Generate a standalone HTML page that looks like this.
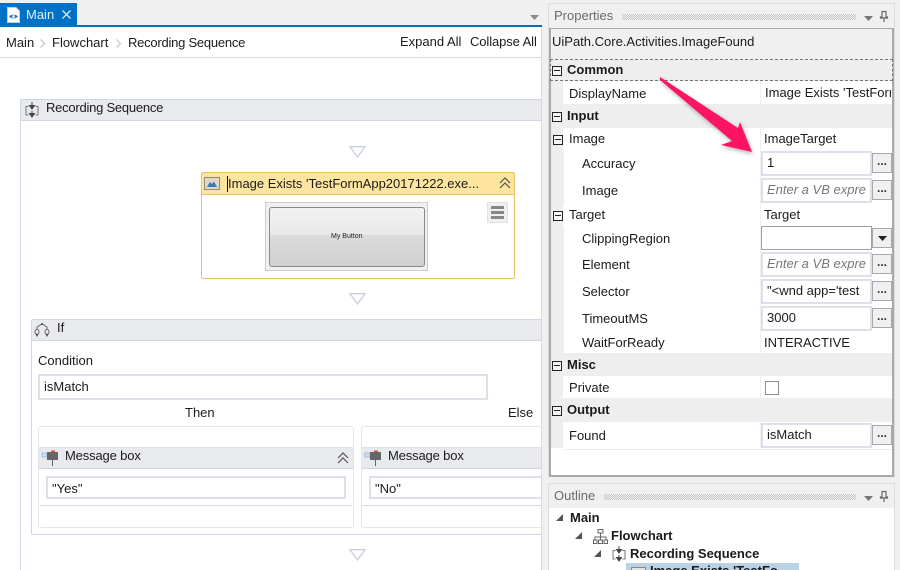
<!DOCTYPE html>
<html><head><meta charset="utf-8"><style>
html,body{margin:0;padding:0}
body{width:900px;height:570px;overflow:hidden;position:relative;background:#f0f0f0;font-family:"Liberation Sans",sans-serif;font-size:13px;color:#1b1b1b}
.a{position:absolute;box-sizing:border-box}
.t{position:absolute;white-space:nowrap;line-height:16px;font-size:13px}
.b{font-weight:bold}
.i{font-style:italic;color:#777}
.inp{position:absolute;box-sizing:border-box;background:#fff;border:2px solid #dde0ea}
.dots{position:absolute;box-sizing:border-box;width:20px;height:20px;background:#f0f0f0;border:1px solid #a8a8a8;font-size:12px;font-weight:bold;text-align:center;line-height:14px;color:#333;left:872px}
.row{position:absolute;left:563px;width:329px;background:#fff;border-bottom:1px solid #eee}
.mn{position:absolute;box-sizing:border-box;width:10px;height:10px;border:1px solid #222;background:#f4f4f4}
.mn:after{content:"";position:absolute;left:1px;top:3px;width:6px;height:1px;background:#222}
.dot{position:absolute;height:6px;background-image:repeating-conic-gradient(#c4c4c4 0 25%,transparent 0 50%);background-size:2px 2px}
svg{position:absolute;overflow:visible}
</style></head><body>

<!-- left doc -->
<div class="a" style="left:0;top:3px;width:77px;height:23px;background:#0072c6"></div>
<div class="a" style="left:0;top:25px;width:542px;height:2px;background:#0072c6"></div>
<div class="a" style="left:0;top:27px;width:542px;height:543px;background:#fff;border-right:1px solid #dcdcdc"></div>
<svg style="left:7px;top:7px" width="13" height="16" viewBox="0 0 13 16"><path d="M.5.5H9L12.500 4V15.500H.5Z" fill="#fff" stroke="#ccc"/><path d="M2 9.500C4 7 9 7 11 9.500 9 12 4 12 2 9.500Z" fill="#2a78c8"/><circle cx="6.500" cy="9.500" r="1.500" fill="#cfe4fa"/></svg>
<div class="t" style="left:26px;top:7px;color:#e4eefa">Main</div>
<svg style="left:62px;top:10px" width="9" height="9"><path d="M.5.5L8.500 8.500M8.500.5L.5 8.500" stroke="#d8e6f6" stroke-width="1.300"/></svg>
<svg style="left:530px;top:15px" width="9" height="5"><path d="M0 0H9L4.500 5Z" fill="#8a8a8a"/></svg>

<div class="t" style="left:6px;top:35px">Main</div>
<svg style="left:40px;top:39px" width="5" height="9"><path d="M.5.5L4.500 4.500.5 8.500" fill="none" stroke="#cfcfcf" stroke-width="1.500"/></svg>
<div class="t" style="left:52px;top:35px">Flowchart</div>
<svg style="left:116px;top:39px" width="5" height="9"><path d="M.5.5L4.500 4.500.5 8.500" fill="none" stroke="#cfcfcf" stroke-width="1.500"/></svg>
<div class="t" style="left:128px;top:35px;letter-spacing:-.24px">Recording Sequence</div>
<div class="t" style="left:400px;top:34px">Expand All</div>
<div class="t" style="left:470px;top:34px;letter-spacing:-.1px">Collapse All</div>
<div class="a" style="left:0;top:57px;width:541px;height:1px;background:#d6d9e0"></div>

<!-- Sequence -->
<div class="a" style="left:20px;top:99px;width:521px;height:471px;border-left:1px solid #d0d6e4;border-top:1px solid #d0d6e4"></div>
<div class="a" style="left:21px;top:100px;width:520px;height:21px;background:#e8eaed;border-bottom:1px solid #d0d6e4"></div>
<svg style="left:25px;top:102px" width="14" height="16" viewBox="0 0 14 16"><path d="M3.500 4.500H1V13H3.500M10.500 4.500H13V13H10.500" fill="none" stroke="#777" stroke-width="1"/><path d="M7 0V4M4.500 3.500L7 7 9.500 3.500ZM7 9V12M4.500 11.500L7 15 9.500 11.500Z" fill="#444" stroke="#444" stroke-width="1"/></svg>
<div class="t" style="left:46px;top:100px;letter-spacing:-.24px">Recording Sequence</div>

<svg style="left:349px;top:146px" width="17" height="12"><path d="M1 .7H16L8.500 11Z" fill="#fff" stroke="#c8cfdc" stroke-width="1.300"/></svg>

<!-- Image exists -->
<div class="a" style="left:201px;top:172px;width:314px;height:107px;background:#fff;border:1px solid #e6c266;border-radius:2px"></div>
<div class="a" style="left:202px;top:173px;width:312px;height:22px;background:#fee59f;border-bottom:1px solid #e6c266"></div>
<svg style="left:204px;top:177px" width="16" height="13" viewBox="0 0 16 13"><rect x=".5" y=".5" width="15" height="12" fill="#e0d8c0" stroke="#8a8a80"/><path d="M3 10L6 5 8 7 10 4.500 13 10Z" fill="#3a78c4"/></svg>
<div class="a" style="left:227px;top:176px;width:1px;height:16px;background:#111"></div>
<div class="t" style="left:228px;top:176px">Image Exists 'TestFormApp20171222.exe...</div>
<svg style="left:499px;top:177px" width="12" height="12"><path d="M1 6L6 1 11 6M1 11L6 6 11 11" fill="none" stroke="#555" stroke-width="1.200"/></svg>
<div class="a" style="left:265px;top:202px;width:163px;height:69px;background:#f0f0f0;border:1px solid #ccc"></div>
<div class="a" style="left:269px;top:207px;width:156px;height:60px;border:1px solid #8a8a8a;border-radius:3px;background:linear-gradient(#f2f2f2 0,#e9e9e9 46%,#dcdcdc 47%,#cfcfcf 100%)"></div>
<div class="t" style="left:331px;top:232px;font-size:7px;line-height:10px;color:#222">My Button</div>
<div class="a" style="left:487px;top:202px;width:21px;height:21px;background:#f0f0f2;border:1px solid #e0e2e8"></div>
<div class="a" style="left:491px;top:206px;width:13px;height:3px;background:#888"></div>
<div class="a" style="left:491px;top:211px;width:13px;height:3px;background:#888"></div>
<div class="a" style="left:491px;top:216px;width:13px;height:3px;background:#888"></div>

<svg style="left:349px;top:293px" width="17" height="12"><path d="M1 .7H16L8.500 11Z" fill="#fff" stroke="#c8cfdc" stroke-width="1.300"/></svg>

<!-- If -->
<div class="a" style="left:31px;top:319px;width:510px;height:216px;border:1px solid #d0d6e4;border-right:0;border-radius:2px 0 0 2px"></div>
<div class="a" style="left:32px;top:320px;width:509px;height:21px;background:#e8eaed;border-bottom:1px solid #d0d6e4"></div>
<svg style="left:34px;top:322px" width="16" height="16" viewBox="0 0 16 16"><path d="M3 7V5L8 2 13 5V7" fill="none" stroke="#666"/><path d="M1.500 12L3 15 4.500 12ZM11.500 12L13 15 14.500 12ZM6.500 3L8 .5 9.500 3Z" fill="#444"/><path d="M1 10C1 6.500 5 6.500 5 10 5 13 1 13 1 10ZM11 10C11 6.500 15 6.500 15 10 15 13 11 13 11 10Z" fill="none" stroke="#666"/></svg>
<div class="t" style="left:57px;top:320px">If</div>
<div class="t" style="left:38px;top:353px">Condition</div>
<div class="inp" style="left:38px;top:374px;width:450px;height:26px"></div>
<div class="t" style="left:44px;top:379px">isMatch</div>
<div class="t" style="left:185px;top:405px">Then</div>
<div class="t" style="left:508px;top:405px">Else</div>

<div class="a" style="left:38px;top:426px;width:316px;height:102px;background:#fff;border:1px solid #e4e6ea;border-radius:3px"></div>
<div class="a" style="left:39px;top:447px;width:314px;height:59px;background:#fff;border-bottom:1px solid #d5d9e3;border-radius:0 0 3px 3px"></div>
<div class="a" style="left:39px;top:447px;width:314px;height:22px;background:#e8eaed;border-bottom:1px solid #d0d6e4;border-top:1px solid #e0e3e8"></div>
<svg style="left:42px;top:449px" width="17" height="17" viewBox="0 0 17 17"><rect x="0" y="4" width="5" height="4" fill="#cfe0f2" stroke="#8fb4dc" stroke-width=".8"/><rect x="5" y="3" width="11" height="8" fill="#666"/><rect x="10" y="11" width="1" height="6" fill="#666"/><rect x="9" y="1.500" width="4" height="1.500" fill="#e44"/></svg>
<div class="t" style="left:65px;top:448px;letter-spacing:-.15px">Message box</div>
<svg style="left:337px;top:452px" width="12" height="12"><path d="M1 6L6 1 11 6M1 11L6 6 11 11" fill="none" stroke="#555" stroke-width="1.200"/></svg>
<div class="inp" style="left:46px;top:476px;width:300px;height:23px"></div>
<div class="t" style="left:52px;top:481px">"Yes"</div>

<div class="a" style="left:361px;top:426px;width:180px;height:102px;background:#fff;border:1px solid #e4e6ea;border-right:0;border-radius:3px 0 0 3px"></div>
<div class="a" style="left:362px;top:447px;width:179px;height:59px;background:#fff;border-bottom:1px solid #d5d9e3"></div>
<div class="a" style="left:362px;top:447px;width:179px;height:22px;background:#e8eaed;border-bottom:1px solid #d0d6e4;border-top:1px solid #e0e3e8"></div>
<svg style="left:365px;top:449px" width="17" height="17" viewBox="0 0 17 17"><rect x="0" y="4" width="5" height="4" fill="#cfe0f2" stroke="#8fb4dc" stroke-width=".8"/><rect x="5" y="3" width="11" height="8" fill="#666"/><rect x="10" y="11" width="1" height="6" fill="#666"/><rect x="9" y="1.500" width="4" height="1.500" fill="#e44"/></svg>
<div class="t" style="left:388px;top:448px;letter-spacing:-.15px">Message box</div>
<div class="inp" style="left:369px;top:476px;width:172px;height:23px;border-right:0"></div>
<div class="t" style="left:375px;top:481px">"No"</div>

<svg style="left:349px;top:549px" width="17" height="12"><path d="M1 .7H16L8.500 11Z" fill="#fff" stroke="#c8cfdc" stroke-width="1.300"/></svg>

<!-- Properties -->
<div class="a" style="left:548px;top:3px;width:347px;height:474px;border:1px solid #dcdcdc;background:#f0f0f0"></div>
<div class="t" style="left:554px;top:8px;color:#6a6a6a">Properties</div>
<div class="dot" style="left:622px;top:14px;width:234px"></div>
<svg style="left:864px;top:16px" width="9" height="5"><path d="M0 0H9L4.500 5Z" fill="#777"/></svg>
<svg style="left:880px;top:11px" width="8" height="11"><path d="M2 .5H6V6H7.500V7H.5V6H2ZM4 7V11" fill="none" stroke="#666" stroke-width="1.200"/></svg>
<div class="a" style="left:549px;top:28px;width:345px;height:449px;border:2px solid #a9a9a9;border-top:1px solid #a9a9a9;background:#fff"></div>
<div class="a" style="left:551px;top:29px;width:341px;height:31px;background:#f0f0f0"></div>
<div class="t" style="left:552px;top:34px">UiPath.Core.Activities.ImageFound</div>

<div class="a" style="left:551px;top:60px;width:341px;height:388px;background:#eee"></div>
<div class="a" style="left:550px;top:59px;width:343px;height:22px;background:#eee;border:1px dashed #777"></div>
<div class="mn" style="left:552px;top:66px"></div>
<div class="t b" style="left:567px;top:62px">Common</div>

<div class="row" style="top:81px;height:23px"></div>
<div class="t" style="left:569px;top:86px">DisplayName</div>
<div class="t" style="left:765px;top:85px;width:126px;overflow:hidden">Image Exists 'TestForm</div>

<div class="mn" style="left:552px;top:112px"></div>
<div class="t b" style="left:567px;top:108px">Input</div>

<div class="row" style="top:128px;height:22px"></div>
<div class="mn" style="left:553px;top:135px"></div>
<div class="t" style="left:569px;top:131px">Image</div>
<div class="t" style="left:764px;top:131px">ImageTarget</div>

<div class="row" style="left:564px;top:150px;width:328px;height:27px"></div>
<div class="t" style="left:582px;top:156px">Accuracy</div>
<div class="inp" style="left:761px;top:151px;width:111px;height:25px"></div>
<div class="t" style="left:767px;top:155px">1</div>
<div class="dots" style="top:153px">...</div>

<div class="row" style="left:564px;top:177px;width:328px;height:27px"></div>
<div class="t" style="left:582px;top:183px">Image</div>
<div class="inp" style="left:761px;top:178px;width:111px;height:25px"></div>
<div class="t i" style="left:767px;top:182px;width:100px;overflow:hidden">Enter a VB expre</div>
<div class="dots" style="top:180px">...</div>

<div class="row" style="top:204px;height:22px"></div>
<div class="mn" style="left:553px;top:211px"></div>
<div class="t" style="left:569px;top:207px">Target</div>
<div class="t" style="left:764px;top:207px">Target</div>

<div class="row" style="left:564px;top:226px;width:328px;height:25px"></div>
<div class="t" style="left:582px;top:231px">ClippingRegion</div>
<div class="a" style="left:761px;top:226px;width:111px;height:24px;background:#fff;border:1px solid #a0a0a0"></div>
<div class="a" style="left:872px;top:228px;width:20px;height:20px;background:#f0f0f0;border:1px solid #a8a8a8"></div>
<svg style="left:878px;top:236px" width="9" height="5"><path d="M0 0H9L4.500 5Z" fill="#222"/></svg>

<div class="row" style="left:564px;top:251px;width:328px;height:27px"></div>
<div class="t" style="left:582px;top:257px">Element</div>
<div class="inp" style="left:761px;top:252px;width:111px;height:25px"></div>
<div class="t i" style="left:767px;top:256px;width:100px;overflow:hidden">Enter a VB expre</div>
<div class="dots" style="top:254px">...</div>

<div class="row" style="left:564px;top:278px;width:328px;height:27px"></div>
<div class="t" style="left:582px;top:284px">Selector</div>
<div class="inp" style="left:761px;top:279px;width:111px;height:25px"></div>
<div class="t" style="left:767px;top:283px;width:100px;overflow:hidden">"&lt;wnd app='test</div>
<div class="dots" style="top:281px">...</div>

<div class="row" style="left:564px;top:305px;width:328px;height:27px"></div>
<div class="t" style="left:582px;top:311px">TimeoutMS</div>
<div class="inp" style="left:761px;top:306px;width:111px;height:25px"></div>
<div class="t" style="left:767px;top:310px">3000</div>
<div class="dots" style="top:308px">...</div>

<div class="row" style="left:564px;top:332px;width:328px;height:21px;border:0"></div>
<div class="t" style="left:582px;top:335px">WaitForReady</div>
<div class="t" style="left:764px;top:335px">INTERACTIVE</div>

<div class="mn" style="left:552px;top:361px"></div>
<div class="t b" style="left:567px;top:357px">Misc</div>

<div class="row" style="top:376px;height:22px;border:0"></div>
<div class="t" style="left:569px;top:380px">Private</div>
<div class="a" style="left:765px;top:381px;width:14px;height:14px;background:#fff;border:1px solid #8e8e8e"></div>

<div class="mn" style="left:552px;top:406px"></div>
<div class="t b" style="left:567px;top:402px">Output</div>

<div class="row" style="top:422px;height:27px"></div>
<div class="t" style="left:569px;top:428px">Found</div>
<div class="inp" style="left:761px;top:423px;width:111px;height:25px"></div>
<div class="t" style="left:767px;top:427px">isMatch</div>
<div class="dots" style="top:425px">...</div>
<div class="a" style="left:760px;top:81px;width:1px;height:23px;background:#f0f0f0"></div>
<div class="a" style="left:760px;top:128px;width:1px;height:225px;background:#f0f0f0"></div>
<div class="a" style="left:760px;top:376px;width:1px;height:22px;background:#f0f0f0"></div>
<div class="a" style="left:760px;top:422px;width:1px;height:26px;background:#f0f0f0"></div>

<!-- Outline -->
<div class="a" style="left:548px;top:483px;width:347px;height:87px;border:1px solid #dcdcdc;border-bottom:0;background:#f0f0f0"></div>
<div class="t" style="left:554px;top:488px;color:#6a6a6a">Outline</div>
<div class="dot" style="left:604px;top:494px;width:252px"></div>
<svg style="left:864px;top:496px" width="9" height="5"><path d="M0 0H9L4.500 5Z" fill="#777"/></svg>
<svg style="left:880px;top:491px" width="8" height="11"><path d="M2 .5H6V6H7.500V7H.5V6H2ZM4 7V11" fill="none" stroke="#666" stroke-width="1.200"/></svg>
<div class="a" style="left:549px;top:508px;width:345px;height:62px;background:#fff"></div>
<svg style="left:556px;top:514px" width="7" height="7"><path d="M7 0V7H0Z" fill="#555"/></svg>
<div class="t b" style="left:570px;top:510px">Main</div>
<svg style="left:575px;top:532px" width="7" height="7"><path d="M7 0V7H0Z" fill="#555"/></svg>
<svg style="left:593px;top:529px" width="15" height="15" viewBox="0 0 15 15"><path d="M5 .5H10V4H5ZM7.500 4V8M2 11V8H13V11M7.500 8V11M.5 11H4V14.500H.5ZM5.500 11H9.500V14.500H5.500ZM11 11H14.500V14.500H11Z" fill="none" stroke="#666"/></svg>
<div class="t b" style="left:611px;top:528px">Flowchart</div>
<svg style="left:594px;top:550px" width="7" height="7"><path d="M7 0V7H0Z" fill="#555"/></svg>
<svg style="left:612px;top:546px" width="14" height="16" viewBox="0 0 14 16"><path d="M3.500 4.500H1V13H3.500M10.500 4.500H13V13H10.500" fill="none" stroke="#777"/><path d="M7 0V4M4.500 3.500L7 7 9.500 3.500ZM7 9V12M4.500 11.500L7 15 9.500 11.500Z" fill="#444" stroke="#444"/></svg>
<div class="t b" style="left:630px;top:546px">Recording Sequence</div>
<div class="a" style="left:626px;top:563px;width:173px;height:7px;background:#b9d2e6"></div>
<div class="a" style="left:631px;top:567px;width:15px;height:3px;background:#e4e4dc;border:1px solid #888;border-bottom:0"></div>
<div class="a" style="left:650px;top:564px;width:140px;height:6px;overflow:hidden"><div class="t b" style="left:0;top:-1px">Image Exists 'TestFo</div></div>

<!-- Pink arrow -->
<svg style="left:0;top:0;filter:drop-shadow(1px 2px 2px rgba(0,0,0,.3))" width="900" height="570"><path d="M660 77L738 128 740 122 752 152 721 145 732 141 660 80Z" fill="#ff1462"/></svg>
</body></html>
